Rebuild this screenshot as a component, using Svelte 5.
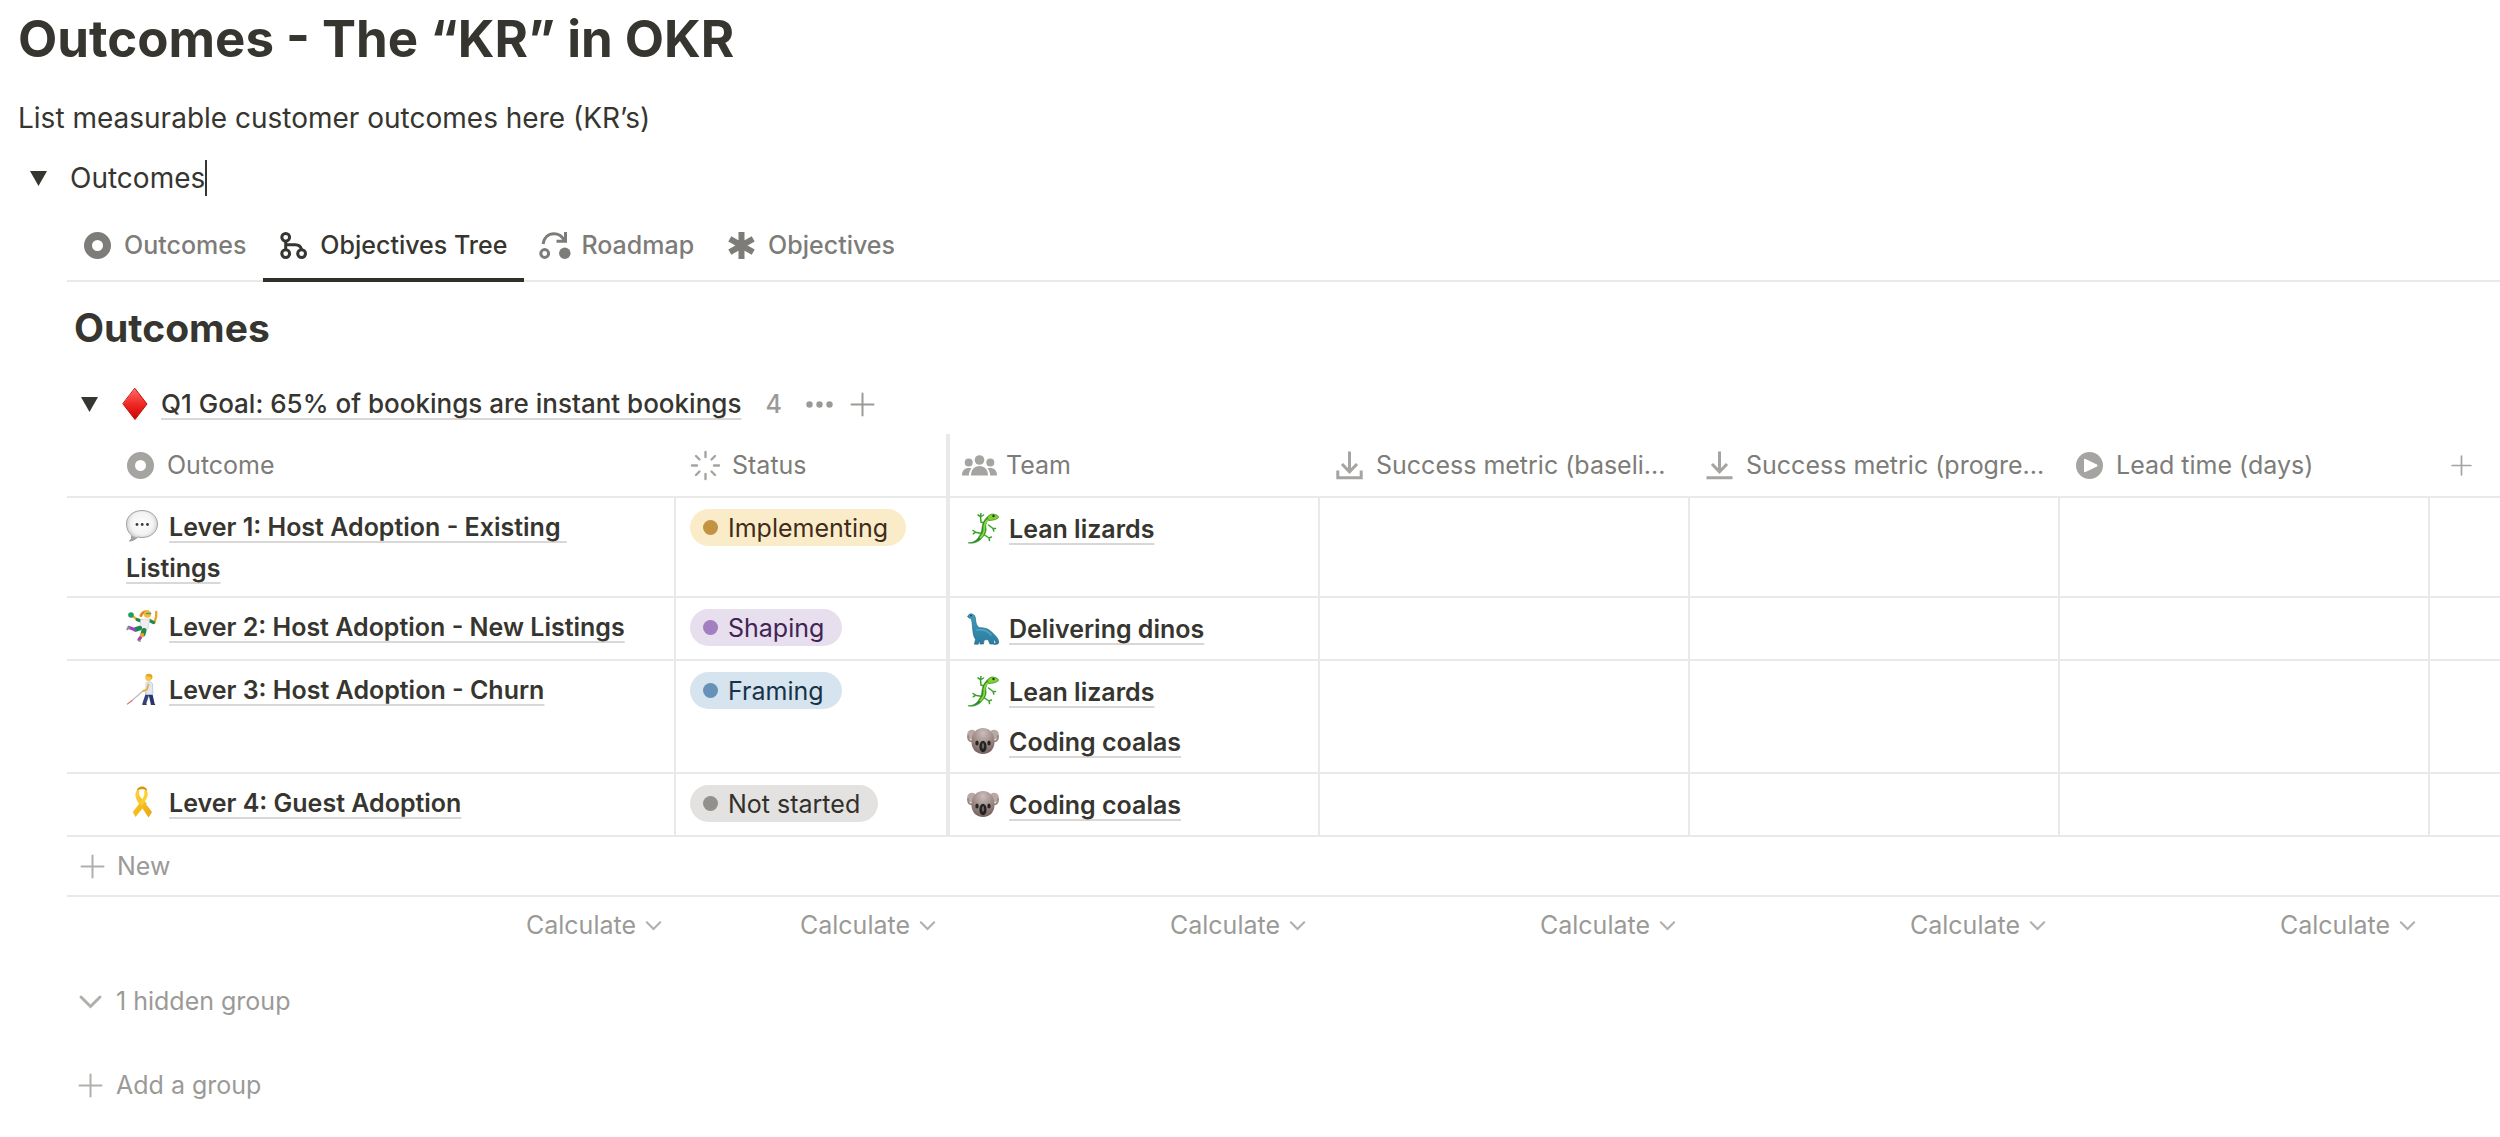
<script>
  const tabs = [
    { label: 'Outcomes', icon: 'ring' },
    { label: 'Objectives Tree', icon: 'tree' },
    { label: 'Roadmap', icon: 'route' },
    { label: 'Objectives', icon: 'asterisk' }
  ];
  let active = $state('Objectives Tree');

  const columns = [
    { label: 'Outcome', icon: 'ring' },
    { label: 'Status', icon: 'spinner' },
    { label: 'Team', icon: 'people' },
    { label: 'Success metric (baseli...', icon: 'tray' },
    { label: 'Success metric (progre...', icon: 'download' },
    { label: 'Lead time (days)', icon: 'play' }
  ];

  const lizards = { name: 'Lean lizards', emoji: 'lizard' };
  const dinos = { name: 'Delivering dinos', emoji: 'dino' };
  const koalas = { name: 'Coding coalas', emoji: 'koala' };

  const rows = [
    { name: 'Lever 1: Host Adoption - Existing\u00a0 Listings', emoji: 'bubble', status: 'Implementing', tone: 'yellow', teams: [lizards] },
    { name: 'Lever 2: Host Adoption - New Listings', emoji: 'handball', status: 'Shaping', tone: 'purple', teams: [dinos] },
    { name: 'Lever 3: Host Adoption - Churn', emoji: 'cane', status: 'Framing', tone: 'blue', teams: [lizards, koalas] },
    { name: 'Lever 4: Guest Adoption', emoji: 'ribbon', status: 'Not started', tone: 'gray', teams: [koalas] }
  ];
</script>

{#snippet icon(name)}
  <svg class="icon" viewBox="0 0 27 27" fill="none" stroke="currentColor" aria-hidden="true">
    {#if name === 'ring'}
      <circle cx="13.5" cy="13.5" r="9.5" stroke-width="8" />
    {:else if name === 'tree'}
      <g stroke-width="3">
        <circle cx="5.7" cy="5.3" r="3.9" />
        <circle cx="5.7" cy="21.6" r="3.9" />
        <circle cx="21.6" cy="21.6" r="3.9" />
        <path d="M5.7 9v9M5.7 12.8h9.6c3.6 0 5.6 1.8 6.3 5.2" />
      </g>
    {:else if name === 'route'}
      <circle cx="3.7" cy="21.5" r="3.9" stroke-width="3" />
      <circle cx="23.8" cy="21.3" r="5.7" fill="currentColor" stroke="none" />
      <path d="M2 12C3 5.500 7.500 1.700 13 1.700c4.500 0 8 2.500 10 6.300" stroke-width="3" />
      <path d="M24.500 0v9.300H15.500" stroke-width="3" />
    {:else if name === 'asterisk'}
      <path d="M13.500 0v27M1.800 6.800l23.400 13.400M25.200 6.800L1.800 20.200" stroke-width="6" />
    {:else if name === 'spinner'}
      <path d="M13.500 0v5M13.500 22v5M0 13.500h5M22 13.500h5M4 4l3.500 3.500M19.500 19.500L23 23M4 23l3.500-3.500M19.500 7.500L23 4" stroke-width="2.400" stroke-linecap="round" />
    {:else if name === 'people'}
      <g fill="currentColor" stroke="none">
        <circle cx="13.500" cy="8" r="4.800" />
        <circle cx="2.700" cy="10.500" r="4" />
        <circle cx="24.300" cy="10.500" r="4" />
        <path d="M5 23.500c0-6 3.500-9.500 8.500-9.500s8.500 3.500 8.500 9.500z" />
        <path d="M-4 23.500c0-5 2.500-7.500 7-7.500 1 0 1.800.1 2.500.5-1.700 2-2.700 4.500-2.700 7z" />
        <path d="M31 23.500c0-5-2.500-7.500-7-7.500-1 0-1.800.1-2.500.5 1.700 2 2.700 4.500 2.700 7z" />
      </g>
    {:else if name === 'tray'}
      <path d="M13.500-.5V19M6 12l7.500 7.800L21 12M1.800 18.500v7.200h23.400v-7.200" stroke-width="3" />
    {:else if name === 'download'}
      <path d="M13.500-.5V19M6 12l7.500 7.800L21 12M.5 25.700h26" stroke-width="3" />
    {:else if name === 'play'}
      <circle cx="13.500" cy="13.500" r="13.500" fill="currentColor" stroke="none" />
      <path d="M9 7.800v11.400L20.500 13.500z" fill="#fff" stroke="#fff" stroke-width="2" stroke-linejoin="round" />
    {:else if name === 'plus'}
      <path d="M13.500 2.500v22M2.500 13.500h22" stroke-width="2" stroke-linecap="round" />
    {:else if name === 'chevron'}
      <path d="M4 9l9.500 9.500L23 9" stroke-width="3" stroke-linecap="round" />
    {:else if name === 'dots'}
      <g fill="currentColor" stroke="none">
        <circle cx="3.500" cy="13.500" r="3.200" /><circle cx="13.500" cy="13.500" r="3.200" /><circle cx="23.500" cy="13.500" r="3.200" />
      </g>
    {:else if name === 'triangle'}
      <path d="M5 6h17l-8.500 15z" fill="currentColor" stroke="none" />
    {/if}
  </svg>
{/snippet}

{#snippet emoji(name)}
  <svg class="emoji" viewBox="0 0 32 32" fill="none" stroke-linecap="round" stroke-linejoin="round" aria-hidden="true">
    {#if name === 'diamond'}
      <path d="M16 .5L28 16 16 31.500 4 16z" fill="url(#red)" stroke="#c4100c" stroke-width="1" />
    {:else if name === 'bubble'}
      <path d="M16 .5c8.800 0 15.500 5.500 15.500 13.500S24.800 27.500 16 27.500c-1.500 0-3-.1-4.300-.5-2 2.200-5 4-8.200 4.200 1.700-1.700 2.500-3.500 2.500-5.700C2.500 23 .5 19 .5 14 .5 6 7.200.5 16 .5z" fill="url(#bubble)" stroke="#a3a3a3" stroke-width="1" />
      <path d="M5 25.500c1.800.9 4 1.500 6.500 1.800-2 2.100-4.800 3.500-7.500 3.700 1.200-1.500 1.600-3.500 1-5.500z" fill="#8d8d8d" opacity=".6" />
      <g fill="#3a3a3a"><circle cx="11" cy="14.500" r="1.400" /><circle cx="16.200" cy="14.500" r="1.400" /><circle cx="21.500" cy="14.500" r="1.400" /></g>
    {:else if name === 'handball'}
      <path d="M15 5.500c1-3 4-4.500 7-3.500" stroke="#e58a1b" stroke-width="3" />
      <circle cx="21.500" cy="4.200" r="3.600" fill="#f6b93a" />
      <path d="M20.500 3.500h4" stroke="#3fa77a" stroke-width="1.600" />
      <path d="M6.500 6l6 4.500" stroke="#f2ab26" stroke-width="2.200" />
      <path d="M11 9.500l4 1.500" stroke="#21884f" stroke-width="3" />
      <circle cx="5" cy="5" r="2.800" fill="#1f9c63" />
      <path d="M25 11l3.500 1.500 1.700-6V2" stroke="#f2a01e" stroke-width="2.300" />
      <path d="M23.500 10.500l4 2" stroke="#21884f" stroke-width="3.200" />
      <path d="M15 9.500l8.500-.5-1.500 10-7.500 1.500z" fill="#eeeef2" stroke="#d3d3da" stroke-width=".8" />
      <path d="M14 18l-4.500 1.500" stroke="#1e8a4c" stroke-width="4.500" />
      <path d="M18 20.500l-1 3.500" stroke="#1e8a4c" stroke-width="5" />
      <path d="M8.500 19.500L3 17.500" stroke="#a33fc6" stroke-width="3.400" />
      <path d="M3 17.500l-1.700 1.800" stroke="#8b8f96" stroke-width="2" />
      <path d="M16.500 24.500l-2 3" stroke="#f2a01e" stroke-width="3.200" />
      <path d="M14.200 28l-1.200 1.500" stroke="#a33fc6" stroke-width="3.200" />
      <path d="M12.500 30.500l1.500 .5" stroke="#8b8f96" stroke-width="1.800" />
    {:else if name === 'cane'}
      <path d="M17.500 17.500L6 27.500" stroke="#b9bcc0" stroke-width="1.200" />
      <path d="M6 27.500L1.500 31" stroke="#d77" stroke-width="1.200" />
      <path d="M21.500 21l-3 9" stroke="#34437c" stroke-width="3.800" />
      <path d="M24.500 21l2 9" stroke="#26356b" stroke-width="3.800" />
      <path d="M17 31.300h3M25.500 31.300h3" stroke="#3a3a44" stroke-width="1.500" />
      <path d="M20.500 9.500c2-1.500 5.500-1 6 1.500l.3 10.500h-6.800z" fill="#dfe8f4" stroke="#b9c7dc" stroke-width=".8" />
      <path d="M22.500 11.500l-1.500 5-3.500 1.500" stroke="#eab24a" stroke-width="2" />
      <circle cx="22.500" cy="4.700" r="3.300" fill="#f8c64a" />
      <path d="M19.500 3c0-2.500 6.500-3.500 7 .5 0 1.500-.5 2.500-1 3-.3-2-1-2.500-2-2.800z" fill="#e8a520" />
    {:else if name === 'ribbon'}
      <path d="M21 17L9.500 31 6.800 26l9-11.500z" fill="#f5bc1c" />
      <path d="M11.500 3.500C6 9 12.500 17 15.800 21.500l6.700 10 3.500-5.500-8.500-11C14.500 11 12 8.500 13.500 5.500z" fill="url(#gold)" />
      <path d="M20 3.500c4 5 .5 10.500-4.200 16l-2.300-3.200C17 12.500 19.500 9 18 5.500z" fill="#fcce2e" />
      <path d="M11 5c0-6 10.200-6 10.200 0-2.500-2.200-7.700-2.200-10.200 0z" fill="#d8960a" />
    {:else if name === 'lizard'}
      <path d="M19 10l-5-.8-.5-5.700M13.500 3.500L11 2M13.500 3.500l.5-3M13.500 4l3-2M21.500 12l4.500 3.500M26 15.500h2.500M26 15.500l.8 2.500M15 20.500l-6.500-1.300M8.500 19.200L6 17.500M8.500 19.200l-2.200 1.600M17.500 22l4.500 3M22 25l2.500-1M22 25l.5 2.500" stroke="#3ba32b" stroke-width="1.500" />
      <path d="M23 5.500c-4 2.500-4.500 6-4 9.500.8 4-2 8-5 11C11 29.500 5 31 1 29.800c4 .2 8-1.600 10-4.800 1.700-2.500 3.500-5 3.800-8.500C15.200 11 17 5.500 22 3z" fill="#2c8f27" stroke="#2c8f27" stroke-width=".6" />
      <path d="M21.500 6c-3.500 3-4.500 6-4.200 9.500.2 3-1.500 6.500-3.800 9" stroke="#8bd839" stroke-width="1.800" />
      <path d="M20.500 4c2-3 5-3.500 7.500-2.500 2.500.7 4 2 3.500 3-1.500 2-6 3-9.500 3z" fill="#86cf2e" stroke="#2c8f27" stroke-width=".7" />
      <circle cx="26.500" cy="3" r="1.200" fill="#173d10" />
    {:else if name === 'dino'}
      <path d="M1 3.500C1 1.500 3 .5 5 1c2.500.5 3.200 2.500 3.500 5 .3 4 1 7 3.500 8.500 3 .5 8 0 12 4 4 3.500 7.500 7 7.800 10.500 0 2.500-3 2.500-5 2.300 2-1 2.500-2 1.500-3.300l-1.500-1.500.2 4.500h-4l-2-4.500-4 .5-.5 4h-3.500l-.3-4-1.500 4.200H7.500l1-5C6 23 6 18 5.500 14 5.200 10.500 5 7.500 4 5.300 2.500 5.300 1 5 1 3.500z" fill="url(#teal)" stroke="#256b8b" stroke-width=".7" />
      <circle cx="4" cy="2.700" r=".8" fill="#123" />
      <path d="M10 17c5-1 10 0 14 5" stroke="#5fb4cf" stroke-width="1.500" opacity=".7" />
    {:else if name === 'koala'}
      <circle cx="5" cy="8.500" r="4.800" fill="#b8a8a6" />
      <circle cx="27" cy="8.500" r="4.800" fill="#b8a8a6" />
      <path d="M1 10c0 3 1.500 5.500 4.500 5.500M31 10c0 3-1.500 5.500-4.500 5.500" stroke="#9b8987" stroke-width="2" />
      <path d="M16 2c6.500 0 11.500 5 11.500 14 0 7-4.500 12-11.500 12S4.500 23 4.500 16C4.500 7 9.500 2 16 2z" fill="url(#koala)" />
      <ellipse cx="10" cy="17" rx="1.700" ry="2.500" fill="#2a2322" />
      <ellipse cx="22" cy="17" rx="1.700" ry="2.500" fill="#2a2322" />
      <ellipse cx="16" cy="20.500" rx="3.600" ry="5.700" fill="#222" />
      <ellipse cx="16" cy="20" rx="1.200" ry="3" fill="#666" />
    {/if}
  </svg>
{/snippet}

<svg class="defs" aria-hidden="true">
  <defs>
    <linearGradient id="red" x1="0" y1="0" x2="0" y2="1"><stop offset="0" stop-color="#ff6a63" /><stop offset=".5" stop-color="#ef2a25" /><stop offset="1" stop-color="#c90503" /></linearGradient>
    <radialGradient id="bubble" cx=".5" cy=".42" r=".6"><stop offset="0" stop-color="#fff" /><stop offset=".6" stop-color="#f3f3f3" /><stop offset="1" stop-color="#bdbdbd" /></radialGradient>
    <linearGradient id="gold" x1="0" y1="0" x2="1" y2="1"><stop offset="0" stop-color="#fdd33c" /><stop offset="1" stop-color="#e9a50c" /></linearGradient>
    <linearGradient id="teal" x1="0" y1="0" x2="0" y2="1"><stop offset="0" stop-color="#3f9cbc" /><stop offset="1" stop-color="#2b7da0" /></linearGradient>
    <radialGradient id="koala" cx=".5" cy=".2" r=".8"><stop offset="0" stop-color="#cbbdba" /><stop offset=".6" stop-color="#9a8784" /><stop offset="1" stop-color="#75605d" /></radialGradient>
  </defs>
</svg>

<main>
  <h1>Outcomes - The “KR” in OKR</h1>
  <p class="lead">List measurable customer outcomes here (KR’s)</p>

  <div class="toggle">
    <button class="fold" aria-label="Collapse Outcomes">{@render icon('triangle')}</button>
    <span class="typed">Outcomes</span>
  </div>

  <section class="board">
    <nav aria-label="Views">
      {#each tabs as tab}
        <button class="tab" class:active={active === tab.label} onclick={() => (active = tab.label)}>
          {@render icon(tab.icon)}{tab.label}
        </button>
      {/each}
    </nav>

    <h2>Outcomes</h2>

    <div class="group">
      <button class="fold" aria-label="Collapse group">{@render icon('triangle')}</button>
      {@render emoji('diamond')}
      <a class="goal" href="#goal">Q1 Goal: 65% of bookings are instant bookings</a>
      <span class="count">4</span>
      <button aria-label="Group options">{@render icon('dots')}</button>
      <button aria-label="Add to group">{@render icon('plus')}</button>
    </div>

    <table>
      <colgroup>
        <col class="c-name" /><col class="c-status" /><col class="c-prop" /><col class="c-prop" /><col class="c-prop" /><col class="c-prop" /><col />
      </colgroup>
      <thead>
        <tr>
          {#each columns as column}
            <th scope="col"><div class="head">{@render icon(column.icon)}<span>{column.label}</span></div></th>
          {/each}
          <th class="add"><button aria-label="Add column">{@render icon('plus')}</button></th>
        </tr>
      </thead>
      <tbody>
        {#each rows as row}
          <tr>
            <td class="name">{@render emoji(row.emoji)}<a href="#row">{row.name}</a></td>
            <td class="status"><span class="pill {row.tone}"><i></i>{row.status}</span></td>
            <td class="team">
              <ul>
                {#each row.teams as team}
                  <li>{@render emoji(team.emoji)}<a href="#team">{team.name}</a></li>
                {/each}
              </ul>
            </td>
            <td></td><td></td><td></td><td></td>
          </tr>
        {/each}
      </tbody>
      <tfoot>
        <tr class="new"><td colspan="7"><button>{@render icon('plus')}New</button></td></tr>
        <tr class="calc">
          {#each columns as column}
            <td><button>Calculate{@render icon('chevron')}</button></td>
          {/each}
          <td></td>
        </tr>
      </tfoot>
    </table>

    <button class="below">{@render icon('chevron')}1 hidden group</button>
    <button class="below">{@render icon('plus')}Add a group</button>
  </section>
</main>

<style>
  :global(body) {
    margin: 0;
    background: #fff;
  }
  .defs {
    display: block;
    width: 0;
    height: 0;
  }
  main {
    color: #37352f;
    font-family: Inter, 'Liberation Sans', sans-serif;
    font-size: 25px;
    line-height: 40px;
  }
  button {
    display: inline-flex;
    align-items: center;
    padding: 0;
    border: 0;
    background: none;
    color: inherit;
    font: inherit;
    cursor: pointer;
  }
  .icon {
    flex: none;
    display: block;
    width: 27px;
    height: 27px;
    overflow: visible;
  }
  .emoji {
    flex: none;
    width: 32px;
    height: 32px;
  }
  a {
    color: inherit;
    font-weight: 600;
    text-decoration: underline 2px #d9d8d6;
    text-decoration-skip-ink: none;
    text-underline-offset: 5px;
  }

  h1 {
    margin: 0;
    padding-left: 18px;
    font-size: 51px;
    font-weight: 700;
    line-height: 77px;
  }
  .lead {
    margin: 20px 0 18px;
    padding-left: 18px;
    font-size: 28px;
    line-height: 42px;
  }
  .toggle {
    display: flex;
    align-items: center;
    gap: 18px;
    min-height: 42px;
    padding-left: 25px;
    font-size: 28px;
  }
  .typed {
    height: 36px;
    border-right: 2px solid #37352f;
    line-height: 36px;
  }

  .board {
    margin: 13px 0 0 67px;
  }
  nav {
    display: flex;
    box-shadow: inset 0 -2px #e9e9e7;
  }
  .tab {
    gap: 13px;
    height: 70px;
    padding: 0 17px;
    border-bottom: 4px solid transparent;
    color: #7d7c78;
    font-weight: 500;
  }
  .tab.active {
    border-color: #2f2e29;
    color: #37352f;
  }

  h2 {
    margin: 20px 0 28px;
    padding-left: 7px;
    font-size: 39px;
    font-weight: 700;
    line-height: 52px;
  }
  .group {
    display: flex;
    align-items: center;
    height: 44px;
    margin-bottom: 8px;
    padding-left: 9px;
    color: #9b9a97;
  }
  .group .fold {
    margin-right: 16px;
    color: #37352f;
  }
  .goal {
    margin: 0 24px 0 10px;
    color: #37352f;
    font-size: 26px;
    font-weight: 500;
  }
  .count {
    margin-right: 24px;
    font-weight: 500;
  }
  .group .count + button {
    margin-right: 16px;
  }

  table {
    width: 100%;
    border-collapse: separate;
    border-spacing: 0;
    table-layout: fixed;
  }
  table button {
    min-height: 40px;
    vertical-align: top;
  }
  .c-name {
    width: 609px;
  }
  .c-status {
    width: 274px;
  }
  .c-prop {
    width: 370px;
  }
  th,
  td {
    padding: 0;
    border-bottom: 2px solid #e9e9e7;
    text-align: left;
    vertical-align: top;
  }
  th {
    height: 62px;
    color: #7d7c78;
    font-weight: 400;
    vertical-align: middle;
  }
  .head {
    display: flex;
    align-items: center;
    gap: 13px;
    padding-left: 16px;
    white-space: nowrap;
  }
  th:first-child .head {
    padding-left: 60px;
  }
  th .icon {
    color: #a5a4a0;
  }
  th:nth-child(2),
  tbody td:nth-child(2) {
    border-right: 4px solid #e9e9e7;
  }
  tbody td {
    border-right: 2px solid #e9e9e7;
  }
  tbody td:last-child {
    border-right: 0;
  }
  .add {
    padding-left: 20px;
  }
  .add .icon {
    width: 23px;
    height: 23px;
  }

  .name {
    padding: 9px 15px 7px 59px;
    line-height: 41px;
  }
  .name .emoji {
    margin-right: 11px;
    vertical-align: -6px;
  }
  .status {
    padding: 11px 0 0 14px;
  }
  .pill {
    display: inline-flex;
    align-items: center;
    gap: 10px;
    height: 37px;
    padding: 0 18px 0 13px;
    border-radius: 19px;
    vertical-align: top;
  }
  .pill i {
    width: 15px;
    height: 15px;
    border-radius: 50%;
  }
  .yellow {
    background: #fbecc9;
    color: #402c1b;
  }
  .yellow i {
    background: #c29343;
  }
  .purple {
    background: #e7deee;
    color: #412454;
  }
  .purple i {
    background: #a27fc0;
  }
  .blue {
    background: #d5e4ee;
    color: #183347;
  }
  .blue i {
    background: #6692b8;
  }
  .gray {
    background: #e3e2e0;
    color: #32302c;
  }
  .gray i {
    background: #91918e;
  }
  .team {
    padding: 11px 0 10px 17px;
  }
  ul {
    display: grid;
    gap: 10px;
    margin: 0;
    padding: 0;
    list-style: none;
  }
  li {
    display: flex;
    align-items: center;
    gap: 10px;
  }

  tfoot,
  .below {
    color: #9b9a97;
  }
  .new td {
    height: 58px;
    padding-left: 12px;
    vertical-align: middle;
  }
  .new button {
    gap: 11px;
  }
  .calc td {
    height: 56px;
    border-bottom: 0;
    text-align: right;
    vertical-align: middle;
  }
  .calc button {
    gap: 8px;
    margin-right: 13px;
  }
  .calc .icon {
    width: 19px;
    height: 19px;
  }
  .below {
    display: flex;
    gap: 12px;
    margin: 28px 0 44px 10px;
  }
  .new .icon,
  .calc .icon,
  .below .icon {
    color: #b0afac;
  }
</style>
